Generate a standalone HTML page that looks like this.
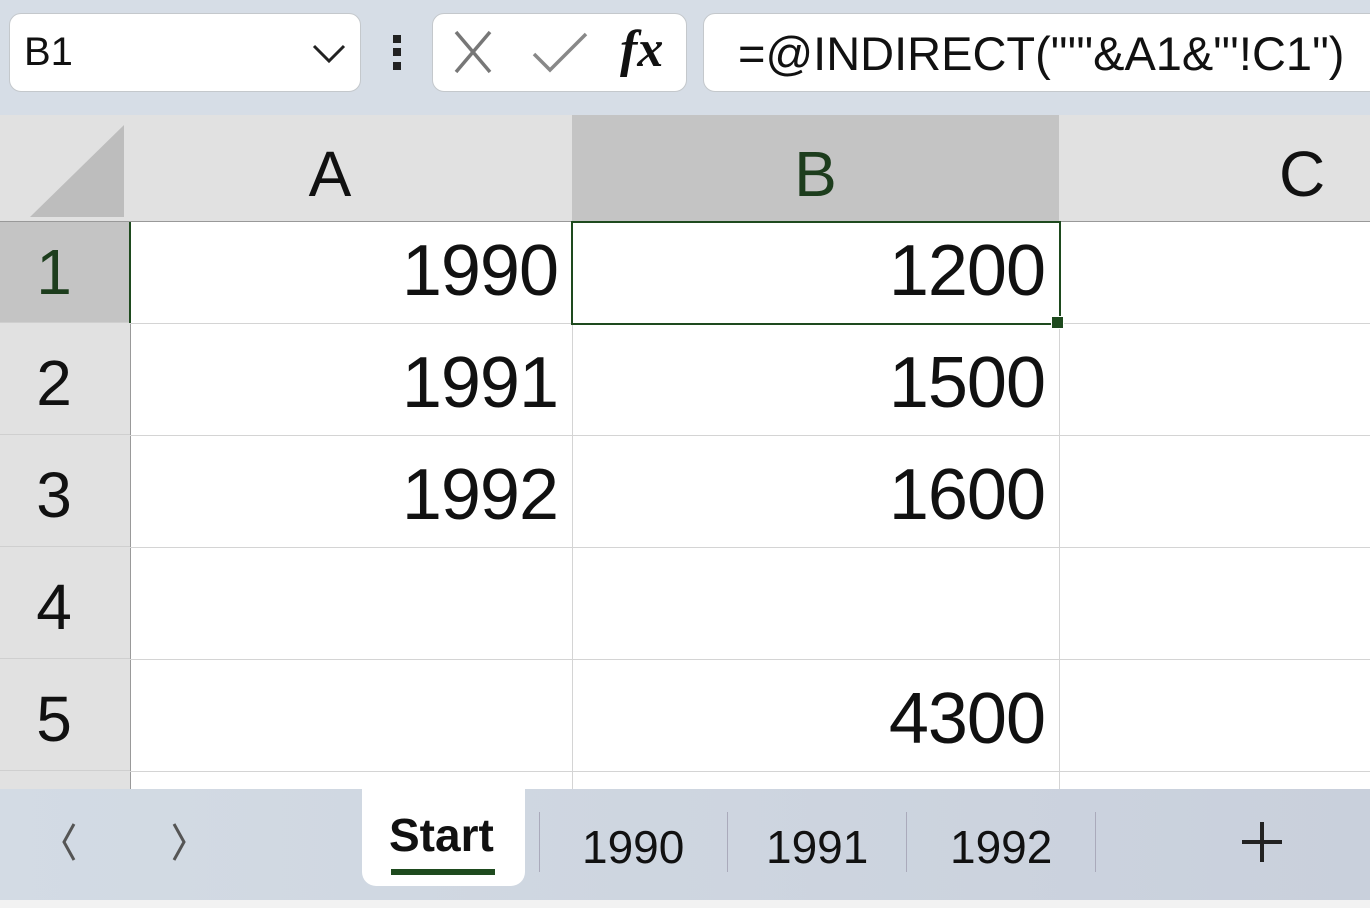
<!DOCTYPE html><html><head><style>
body{margin:0;width:1370px;height:908px;overflow:hidden;position:relative;font-family:"Liberation Sans",sans-serif;background:#fff}
.a{position:absolute}
.box{position:absolute;background:#fff;border:1.5px solid #c4c8cc;border-radius:12px;box-sizing:border-box}
.hdr{position:absolute;top:115px;height:107px;background:#e1e1e1;font-size:64px;text-align:center;line-height:118px;color:#111}
.rh{position:absolute;left:0;width:130px;background:#e1e1e1;font-size:64px;text-align:center;color:#111;border-bottom:1px solid #cfcfcf;box-sizing:border-box;padding-right:22px}
.hl{position:absolute;height:1px;background:#d4d4d4;left:130px;width:1240px}
.vl{position:absolute;width:1px;background:#d4d4d4;top:222px;height:568px}
.n{position:absolute;font-size:72px;color:#111;text-align:right;letter-spacing:-1px}
.tab{position:absolute;top:812px;font-size:46px;color:#111}
.sep{position:absolute;top:812px;width:1px;height:60px;background:#aab}
</style></head><body>
<div class="a" style="left:0;top:0;width:1370px;height:115px;background:#d6dde6"></div>
<div class="box" style="left:9px;top:13px;width:352px;height:79px"></div>
<div class="a" style="left:24px;top:30px;font-size:40px;color:#111">B1</div>
<svg class="a" style="left:310px;top:40px" width="40" height="26"><path d="M4 6 L19 21 L34 6" fill="none" stroke="#222" stroke-width="3"/></svg>
<div class="a" style="left:393px;top:35px;width:8px;height:8px;background:#222"></div>
<div class="a" style="left:393px;top:48px;width:8px;height:8px;background:#222"></div>
<div class="a" style="left:393px;top:62px;width:8px;height:8px;background:#222"></div>
<div class="box" style="left:432px;top:13px;width:255px;height:79px"></div>
<svg class="a" style="left:450px;top:28px" width="230" height="50"><path d="M6 4 L40 44 M40 4 L6 44" stroke="#777" stroke-width="3.5"/><path d="M84 26 L100 42 L136 6" fill="none" stroke="#888" stroke-width="3.5"/></svg>
<div class="a" style="left:620px;top:20px;font-size:52px;font-family:'Liberation Serif',serif;font-style:italic;font-weight:bold;color:#111">fx</div>
<div class="box" style="left:703px;top:13px;width:700px;height:79px"></div>
<div class="a" style="left:738px;top:26px;font-size:47px;color:#111;white-space:nowrap">=@INDIRECT("'"&amp;A1&amp;"'!C1")</div>

<div class="hdr" style="left:0;width:130px"></div>
<svg class="a" style="left:30px;top:125px" width="96" height="92"><polygon points="94,0 94,92 0,92" fill="#bdbdbd"/></svg>
<div class="hdr" style="left:130px;width:442px;padding-right:42px;box-sizing:border-box">A</div>
<div class="hdr" style="left:572px;width:487px;background:#c4c4c4;color:#1d3d1d;border-bottom:2px solid #1e4a1e;box-sizing:border-box;height:108px">B</div>
<div class="hdr" style="left:1059px;width:311px;padding-left:220px;box-sizing:border-box;text-align:left">C</div>
<div class="a" style="left:0;top:221px;width:1370px;height:1px;background:#999"></div>

<div class="rh" style="top:222px;height:101px;line-height:100px;background:#c4c4c4;color:#1d3d1d">1</div>
<div class="rh" style="top:323px;height:112px;line-height:120px">2</div>
<div class="rh" style="top:435px;height:112px;line-height:120px">3</div>
<div class="rh" style="top:547px;height:112px;line-height:120px">4</div>
<div class="rh" style="top:659px;height:112px;line-height:120px">5</div>
<div class="rh" style="top:771px;height:20px"></div>
<div class="a" style="left:129px;top:222px;width:2px;height:101px;background:#1e4a1e"></div>
<div class="a" style="left:130px;top:323px;width:1px;height:468px;background:#999"></div>

<div class="hl" style="top:323px"></div><div class="hl" style="top:435px"></div><div class="hl" style="top:547px"></div><div class="hl" style="top:659px"></div><div class="hl" style="top:771px"></div>
<div class="vl" style="left:572px"></div><div class="vl" style="left:1059px"></div>
<div class="a" style="left:571px;top:221px;width:490px;height:104px;border:2px solid #1e4a1e;box-sizing:border-box"></div>
<div class="a" style="left:1051px;top:316px;width:11px;height:11px;background:#1e4a1e;border:1px solid #fff"></div>

<div class="n" style="left:300px;width:258px;top:230px">1990</div>
<div class="n" style="left:300px;width:258px;top:342px">1991</div>
<div class="n" style="left:300px;width:258px;top:454px">1992</div>
<div class="n" style="left:780px;width:265px;top:230px">1200</div>
<div class="n" style="left:780px;width:265px;top:342px">1500</div>
<div class="n" style="left:780px;width:265px;top:454px">1600</div>
<div class="n" style="left:780px;width:265px;top:678px">4300</div>

<div class="a" style="left:0;top:789px;width:1370px;height:111px;background:linear-gradient(90deg,#d3dbe4,#c9d0dc)"></div>
<div class="a" style="left:0;top:900px;width:1370px;height:8px;background:#f2f2f2"></div>
<svg class="a" style="left:50px;top:820px" width="150" height="44"><path d="M24 4 L14 22 L24 40" fill="none" stroke="#555" stroke-width="3"/><path d="M124 4 L134 22 L124 40" fill="none" stroke="#555" stroke-width="3"/></svg>
<div class="a" style="left:362px;top:789px;width:163px;height:97px;background:#fff;border-radius:0 0 14px 14px"></div>
<div class="tab" style="left:389px;top:808px;font-weight:bold;font-size:46px">Start</div>
<div class="a" style="left:391px;top:869px;width:104px;height:6px;background:#1e4a1e"></div>
<div class="sep" style="left:539px"></div><div class="sep" style="left:727px"></div><div class="sep" style="left:906px"></div><div class="sep" style="left:1095px"></div>
<div class="tab" style="left:582px;top:820px">1990</div>
<div class="tab" style="left:766px;top:820px">1991</div>
<div class="tab" style="left:950px;top:820px">1992</div>
<div class="a" style="left:1242px;top:840px;width:40px;height:4px;background:#222"></div>
<div class="a" style="left:1260px;top:822px;width:4px;height:40px;background:#222"></div>
</body></html>
